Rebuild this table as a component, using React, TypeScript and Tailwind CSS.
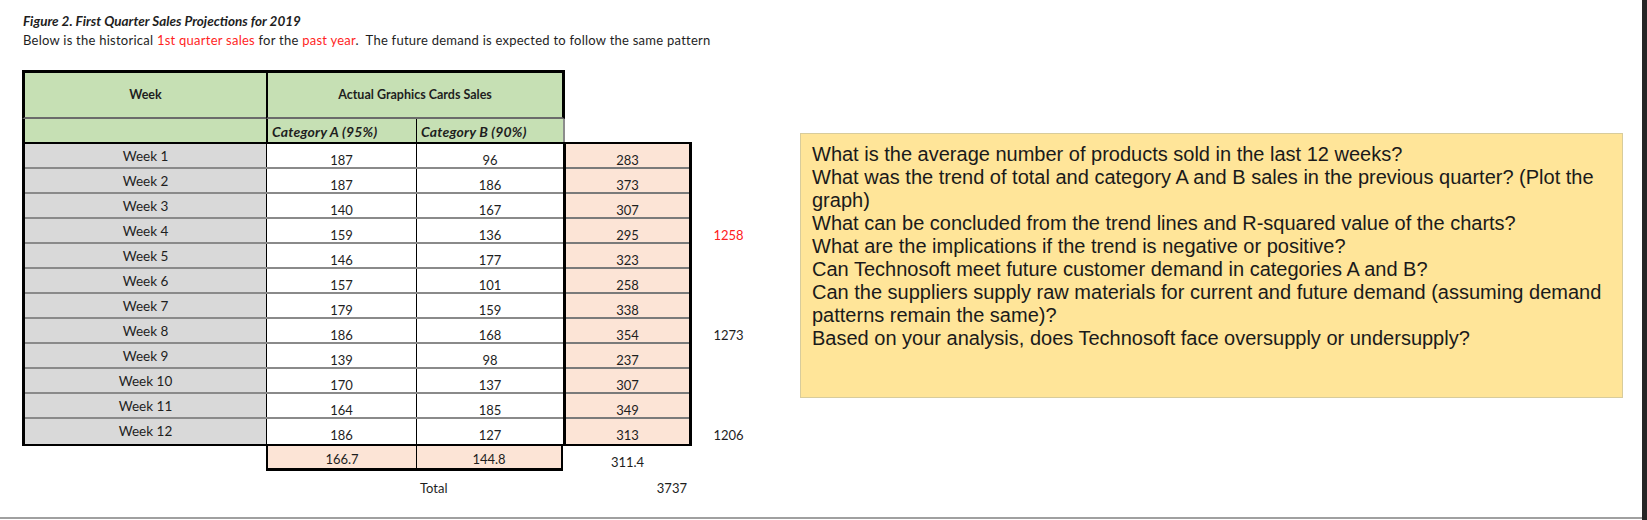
import React from "react";

const rows: [string, number, number, number][] = [
  ["Week 1", 187, 96, 283],
  ["Week 2", 187, 186, 373],
  ["Week 3", 140, 167, 307],
  ["Week 4", 159, 136, 295],
  ["Week 5", 146, 177, 323],
  ["Week 6", 157, 101, 258],
  ["Week 7", 179, 159, 338],
  ["Week 8", 186, 168, 354],
  ["Week 9", 139, 98, 237],
  ["Week 10", 170, 137, 307],
  ["Week 11", 164, 185, 349],
  ["Week 12", 186, 127, 313],
];

const extra: Record<number, { v: string; red?: boolean }> = {
  3: { v: "1258", red: true },
  7: { v: "1273" },
  11: { v: "1206" },
};

const questions = [
  "What is the average number of products sold in the last 12 weeks?",
  "What was the trend of total and category A and B sales in the previous quarter? (Plot the",
  "graph)",
  "What can be concluded from the trend lines and R-squared value of the charts?",
  "What are the implications if the trend is negative or positive?",
  "Can Technosoft meet future customer demand in categories A and B?",
  "Can the suppliers supply raw materials for current and future demand (assuming demand",
  "patterns remain the same)?",
  "Based on your analysis, does Technosoft face oversupply or undersupply?",
];

export default function App() {
  return (
    <div className="flex h-[520px] w-[1647px] overflow-hidden bg-white">
      <div className="flex h-[519px] flex-1 flex-col border-b-2 border-[#a0a0a0] font-[Lato,sans-serif] text-[#1e1e1e]">
        {/* Title */}
        <div className="pl-[23px] pt-[13px]">
          <div className="h-[16px] text-[13.5px] font-bold italic leading-[16px]">
            Figure 2. First Quarter Sales Projections for 2019
          </div>
          <div className="mt-[3px] h-[16px] text-[13px] leading-[16px] tracking-[0.25px]">
            Below is the historical <span className="text-[#ff1f1f]">1st quarter sales</span> for the{" "}
            <span className="text-[#ff1f1f]">past year</span>.&nbsp; The future demand is expected to follow the same pattern
          </div>
        </div>

        <div className="mt-[22px] flex pl-[22px]">
          {/* Table */}
          <div className="flex w-[743px] flex-col text-[13px]">
            {/* Header row 1 */}
            <div className="flex h-[49px] w-[543px] bg-[#c6e0b4] text-[12.5px] font-bold">
              <div className="flex w-[244px] items-center justify-center border-t-[3px] border-l-[3px] border-b-2 border-t-black border-l-black border-b-[#6b6b6b]">
                Week
              </div>
              <div className="flex w-[299px] items-center justify-center border-t-[3px] border-l-2 border-r-[3px] border-b-2 border-t-black border-l-black border-r-black border-b-[#6b6b6b]">
                Actual Graphics Cards Sales
              </div>
            </div>
            {/* Header row 2 */}
            <div className="flex h-[23px] w-[543px] bg-[#c6e0b4] text-[14px] font-bold italic tracking-[0.2px]">
              <div className="w-[244px] border-l-[3px] border-black" />
              <div className="flex w-[150px] items-center whitespace-nowrap border-l-2 border-black pl-[4px] pt-[2px]">
                Category A (95%)
              </div>
              <div className="flex w-[149px] items-center whitespace-nowrap border-l border-r-2 border-l-black border-r-[#8c8c8c] pl-[4px] pt-[2px]">
                Category B (90%)
              </div>
            </div>

            {/* Body */}
            <div className="flex">
              <div className="flex w-[541px] flex-col border-t-2 border-b-2 border-l-[3px] border-black">
                {rows.map((r, i) => (
                  <div
                    key={r[0]}
                    className={`flex h-[25px] ${i < 11 ? "border-b-2 border-[#8a8a8a]" : ""}`}
                  >
                    <div className="w-[241px] bg-[#d9d9d9] pt-[4px] text-center text-[13.5px] leading-[16px]">{r[0]}</div>
                    <div className="w-[150px] border-l border-black bg-white pt-[9px] text-center leading-[14px]">{r[1]}</div>
                    <div className="w-[147px] border-l border-black bg-white pt-[9px] text-center leading-[14px]">{r[2]}</div>
                  </div>
                ))}
              </div>
              <div className="flex w-[129px] flex-col border-t-2 border-b-2 border-x-[3px] border-black bg-[#fce4d6]">
                {rows.map((r, i) => (
                  <div
                    key={r[0]}
                    className={`h-[25px] pt-[9px] text-center leading-[14px] ${i < 11 ? "border-b-2 border-[#7a7a7a]" : ""}`}
                  >
                    {r[3]}
                  </div>
                ))}
              </div>
              <div className="flex w-[73px] flex-col pt-[2px]">
                {rows.map((r, i) => (
                  <div
                    key={r[0]}
                    className={`h-[25px] pt-[9px] text-center leading-[14px] ${extra[i]?.red ? "text-[#ff2020]" : ""}`}
                  >
                    {extra[i]?.v ?? ""}
                  </div>
                ))}
              </div>
            </div>

            {/* Average row */}
            <div className="flex h-[25px]">
              <div className="w-[244px]" />
              <div className="w-[150px] border-l-2 border-b-[3px] border-black bg-[#fce4d6] pt-[5px] text-center leading-[16px]">
                166.7
              </div>
              <div className="w-[147px] border-l border-r-2 border-b-[3px] border-black bg-[#fce4d6] pt-[5px] text-center leading-[16px]">
                144.8
              </div>
              <div className="w-[129px] pt-[8px] text-center leading-[16px]">311.4</div>
            </div>

            {/* Total row */}
            <div className="flex h-[25px]">
              <div className="w-[394px]" />
              <div className="w-[147px] pl-[4px] pt-[9px] leading-[16px]">Total</div>
              <div className="w-[129px] pr-[5px] pt-[9px] text-right leading-[16px]">3737</div>
            </div>
          </div>

          {/* Questions box */}
          <div className="ml-[35px] mt-[63px] h-[265px] w-[823px] border border-[#d8cc9c] bg-[#ffe599] pl-[11px] pt-[9px] font-['Liberation_Sans',Arial,sans-serif] text-[20px] leading-[23px] text-[#1a1a1a]">
            {questions.map((q) => (
              <div key={q} className="whitespace-nowrap">
                {q}
              </div>
            ))}
          </div>
        </div>
      </div>
      <div className="h-full w-[5px] bg-[#262626]" />
    </div>
  );
}
